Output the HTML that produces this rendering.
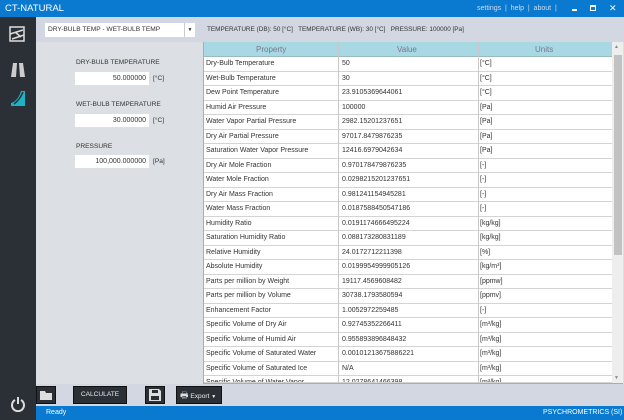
<!DOCTYPE html><html><head><style>
*{margin:0;padding:0;box-sizing:border-box}
body{width:624px;height:420px;overflow:hidden;font-family:"Liberation Sans",sans-serif;background:#dcdfe3;position:relative;font-size:8px;color:#333}
.a{position:absolute;white-space:nowrap}
.row{position:absolute;left:204px;width:408px;height:14.5px;border-bottom:1px solid #d4d4d4;background:#fff}
.row span{position:absolute;top:3px;white-space:nowrap;font-size:7px;color:#333}
.c1{left:2px}.c2{left:138px}.c3{left:276px}
.vl{position:absolute;top:42px;width:1px;height:341px;background:#c8c8c8}
.lbl{font-size:6.6px;color:#333}
.inp{background:#fff;height:13px;width:74px;text-align:right;padding-right:3px;font-size:7px;line-height:13px}
.btn{background:#2b3036;border:1px solid #111;color:#eee;font-size:6.6px;text-align:center;line-height:16px;height:18px;top:386px}
</style></head><body>
<div class="a" style="left:0;top:0;width:624px;height:17px;background:#0a7ad0"></div>
<div class="a" style="left:5px;top:3px;color:#fff;font-size:9.5px">CT-NATURAL</div>
<div class="a" style="left:477px;top:5px;color:#cde;font-size:7px">settings &nbsp;| &nbsp;help &nbsp;| &nbsp;about &nbsp;|</div>
<div class="a" style="left:572px;top:9px;width:5px;height:2px;background:#fff"></div>
<div class="a" style="left:590px;top:5px;width:6px;height:6px;border:1px solid #fff;border-top-width:2px"></div>
<div class="a" style="left:609px;top:3px;color:#fff;font-size:9px">✕</div>
<div class="a" style="left:0;top:17px;width:36px;height:403px;background:#2b3036"></div>
<svg class="a" style="left:9px;top:26px" width="18" height="18"><rect x="1" y="1" width="14" height="14" fill="none" stroke="#ddd" stroke-width="1.5"/><path d="M1 8 L14 4 M3 13 L15 9 M6 6 L12 11" stroke="#ddd" stroke-width="1.5" fill="none"/></svg>
<svg class="a" style="left:10px;top:62px" width="16" height="16"><path d="M3 1 L7 1 L6 15 L1 15Z M9 1 L13 1 L15 15 L10 15Z" fill="#ccc"/></svg>
<svg class="a" style="left:9px;top:90px" width="18" height="17"><path d="M2 16 L16 16 L16 1 L12 1 C10 8 6 12 2 13Z" fill="#1bb3c6"/><path d="M5 14 C9 11 12 7 14 2" stroke="#2b3036" stroke-width="1.5" fill="none"/></svg>
<svg class="a" style="left:10px;top:396px" width="16" height="16"><path d="M5 4 A6 6 0 1 0 11 4" stroke="#ddd" stroke-width="2" fill="none"/><path d="M8 1 V8" stroke="#ddd" stroke-width="2"/></svg>
<div class="a" style="left:36px;top:17px;width:588px;height:25px;background:#d2d7e2"></div>
<div class="a" style="left:45px;top:23px;width:150px;height:14px;background:#fff;font-size:6.6px;line-height:14px;padding-left:3px">DRY-BULB TEMP - WET-BULB TEMP<span style="position:absolute;right:0;top:0;width:11px;border-left:1px solid #ccc;text-align:center;font-size:5px">▼</span></div>
<div class="a" style="left:207px;top:26px;font-size:6.4px;color:#333">TEMPERATURE (DB): 50 [°C] &nbsp; TEMPERATURE (WB): 30 [°C] &nbsp; PRESSURE: 100000 [Pa]</div>
<div class="a lbl" style="left:76px;top:59px">DRY-BULB TEMPERATURE</div>
<div class="a inp" style="left:75px;top:72px">50.000000</div><div class="a lbl" style="left:153px;top:75px">[°C]</div>
<div class="a lbl" style="left:76px;top:101px">WET-BULB TEMPERATURE</div>
<div class="a inp" style="left:75px;top:114px">30.000000</div><div class="a lbl" style="left:153px;top:117px">[°C]</div>
<div class="a lbl" style="left:76px;top:143px">PRESSURE</div>
<div class="a inp" style="left:75px;top:155px">100,000.000000</div><div class="a lbl" style="left:153px;top:158px">[Pa]</div>
<div class="a" style="left:203px;top:42px;width:420px;height:342px;background:#fff;border:1px solid #aab;overflow:hidden"></div>
<div class="a" style="left:204px;top:42px;width:408px;height:15px;background:#a9d8e5;border-bottom:1px solid #9bb"></div>
<div class="a" style="left:256px;top:45px;color:#778;font-size:8px">Property</div>
<div class="a" style="left:397px;top:45px;color:#778;font-size:8px">Value</div>
<div class="a" style="left:535px;top:45px;color:#778;font-size:8px">Units</div>
<div class="a" style="left:612px;top:42px;width:11px;height:341px;background:#eee"></div>
<div class="a" style="left:614px;top:55px;width:8px;height:200px;background:#c2c2c2"></div>
<div class="a" style="left:614px;top:44px;font-size:5px;color:#888">▲</div>
<div class="a" style="left:614px;top:375px;font-size:5px;color:#888">▼</div>
<div id="rows"></div>
<div class="vl" style="left:338px"></div><div class="vl" style="left:478px"></div>
<div class="a" style="left:36px;top:384px;width:588px;height:22px;background:#d2d7e2"></div>
<div class="a btn" style="left:36px;width:20px"><svg width="12" height="10" style="margin-top:3px"><path d="M0 1 H5 L6 3 H12 V10 H0Z" fill="#ddd"/></svg></div>
<div class="a btn" style="left:73px;width:54px">CALCULATE</div>
<div class="a btn" style="left:145px;width:20px"><svg width="12" height="12" style="margin-top:2px"><path d="M0 0 H10 L12 2 V12 H0Z" fill="#ddd"/><rect x="3" y="1" width="6" height="3" fill="#2b3036"/><rect x="2" y="7" width="8" height="4" fill="#2b3036"/></svg></div>
<div class="a btn" style="left:176px;width:46px;text-align:left;padding-left:3px"><span style="color:#ddd;font-size:9px">🖶</span> Export <span style="font-size:5px">▼</span></div>
<div class="a" style="left:36px;top:406px;width:588px;height:14px;background:#0a7ad0"></div>
<div class="a" style="left:46px;top:409px;color:#fff;font-size:7px">Ready</div>
<div class="a" style="left:543px;top:409px;color:#fff;font-size:7px">PSYCHROMETRICS (SI)</div>
<script>
var d=[["Dry-Bulb Temperature","50","[°C]"],["Wet-Bulb Temperature","30","[°C]"],["Dew Point Temperature","23.9105369644061","[°C]"],["Humid Air Pressure","100000","[Pa]"],["Water Vapor Partial Pressure","2982.15201237651","[Pa]"],["Dry Air Partial Pressure","97017.8479876235","[Pa]"],["Saturation Water Vapor Pressure","12416.6979042634","[Pa]"],["Dry Air Mole Fraction","0.970178479876235","[-]"],["Water Mole Fraction","0.0298215201237651","[-]"],["Dry Air Mass Fraction","0.981241154945281","[-]"],["Water Mass Fraction","0.0187588450547186","[-]"],["Humidity Ratio","0.0191174666495224","[kg/kg]"],["Saturation Humidity Ratio","0.088173280831189","[kg/kg]"],["Relative Humidity","24.0172712211398","[%]"],["Absolute Humidity","0.0199954999905126","[kg/m³]"],["Parts per million by Weight","19117.4569608482","[ppmw]"],["Parts per million by Volume","30738.1793580594","[ppmv]"],["Enhancement Factor","1.0052972259485","[-]"],["Specific Volume of Dry Air","0.92745352266411","[m³/kg]"],["Specific Volume of Humid Air","0.955893896848432","[m³/kg]"],["Specific Volume of Saturated Water","0.00101213675886221","[m³/kg]"],["Specific Volume of Saturated Ice","N/A","[m³/kg]"],["Specific Volume of Water Vapor","12.0278641466398","[m³/kg]"]];
var h="";d.forEach(function(r,i){var t=57+i*14.5;var hh=Math.min(14.5,383-t);h+='<div class="row" style="top:'+t+'px;height:'+hh+'px;overflow:hidden"><span class="c1">'+r[0]+'</span><span class="c2">'+r[1]+'</span><span class="c3">'+r[2]+'</span></div>';});
document.getElementById("rows").innerHTML=h;
</script>
</body></html>
